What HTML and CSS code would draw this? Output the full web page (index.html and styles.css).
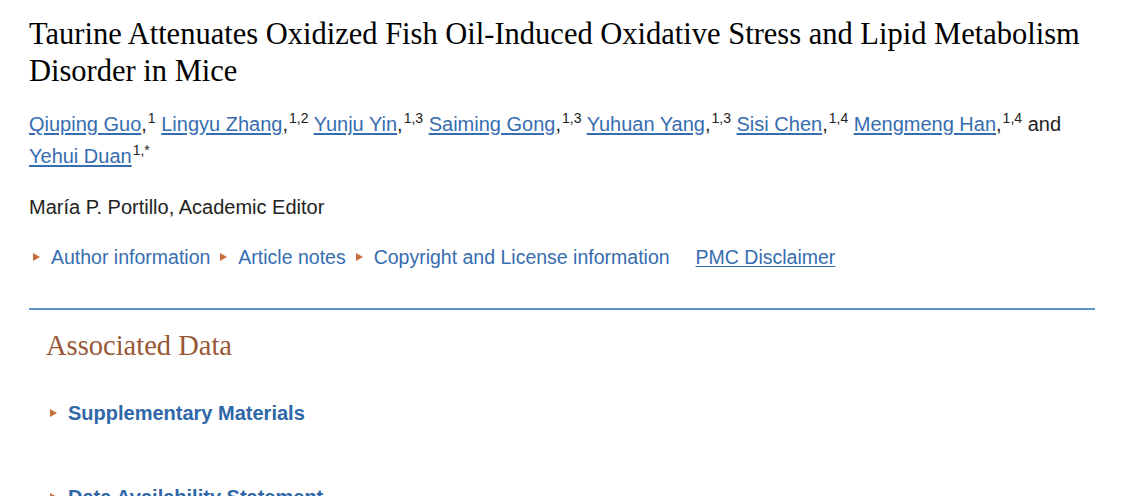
FILE: index.html
```html
<!DOCTYPE html>
<html lang="en">
<head>
<meta charset="utf-8">
<title>Taurine Attenuates Oxidized Fish Oil-Induced Oxidative Stress</title>
<link rel="stylesheet" href="styles.css">
</head>
<body>
<main class="article">
  <h1 class="title">Taurine Attenuates Oxidized Fish Oil-Induced Oxidative Stress and Lipid Metabolism Disorder in Mice</h1>
  <p class="authors">
    <a href="#">Qiuping Guo</a>,<sup>1</sup> <a href="#">Lingyu Zhang</a>,<sup>1,2</sup> <a href="#">Yunju Yin</a>,<sup>1,3</sup> <a href="#">Saiming Gong</a>,<sup>1,3</sup> <a href="#">Yuhuan Yang</a>,<sup>1,3</sup> <a href="#">Sisi Chen</a>,<sup>1,4</sup> <a href="#">Mengmeng Han</a>,<sup>1,4</sup> and <a href="#">Yehui Duan</a><sup>1,*</sup>
  </p>
  <p class="editor">María P. Portillo, Academic Editor</p>
  <div class="toggles">
    <span class="toggle"><span class="tri"></span>Author information</span>
    <span class="toggle"><span class="tri"></span>Article notes</span>
    <span class="toggle"><span class="tri"></span>Copyright and License information</span>
    <a class="disclaimer" href="#">PMC Disclaimer</a>
  </div>
  <section class="assoc">
    <h2 class="assoc-title">Associated Data</h2>
    <div class="assoc-item"><span class="tri"></span>Supplementary Materials</div>
    <div class="assoc-item"><span class="tri"></span>Data Availability Statement</div>
  </section>
</main>
</body>
</html>
```

FILE: styles.css
```css
html, body {
  margin: 0;
  padding: 0;
  background: #fff;
}
body {
  font-family: "Liberation Sans", Arial, sans-serif;
  color: #222;
  overflow: hidden;
}
.article {
  width: 1066px;
  padding: 16px 0 0 29px;
}
.title {
  font-family: "Liberation Serif", "Times New Roman", serif;
  font-weight: normal;
  font-size: 30.5px;
  line-height: 37px;
  color: #000;
  margin: 0;
}
.authors {
  margin: 18px 0 0;
  font-size: 20px;
  line-height: 32px;
}
.authors a, .disclaimer {
  color: #366db0;
  text-decoration: underline;
  text-underline-offset: 2px;
}
.authors sup {
  font-size: 14px;
  line-height: 0;
  vertical-align: 8px;
  margin-left: 1px;
}
.editor {
  margin: 23px 0 0;
  font-size: 20px;
  line-height: 24px;
}
.toggles {
  display: flex;
  align-items: center;
  margin-top: 26px;
  font-size: 19.5px;
  line-height: 24px;
  color: #366db0;
}
.toggle {
  display: flex;
  align-items: center;
  margin-right: 6px;
}
.tri {
  display: inline-block;
  width: 0;
  height: 0;
  border-top: 4px solid transparent;
  border-bottom: 4px solid transparent;
  border-left: 7px solid #c8703a;
  margin: 0 11px 0 4px;
}
.disclaimer {
  margin-left: 20px;
}
.assoc {
  margin-top: 39px;
  border-top: 2px solid #5b96cc;
}
.assoc-title {
  font-family: "Liberation Serif", "Times New Roman", serif;
  font-weight: normal;
  font-size: 28.5px;
  line-height: 34px;
  color: #985735;
  margin: 19px 0 0 17px;
}
.assoc-item {
  display: flex;
  align-items: center;
  font-weight: bold;
  font-size: 20px;
  line-height: 24px;
  color: #2f67a8;
  margin: 38px 0 0 17px;
}
.assoc-item + .assoc-item {
  margin-top: 60px;
}
```
